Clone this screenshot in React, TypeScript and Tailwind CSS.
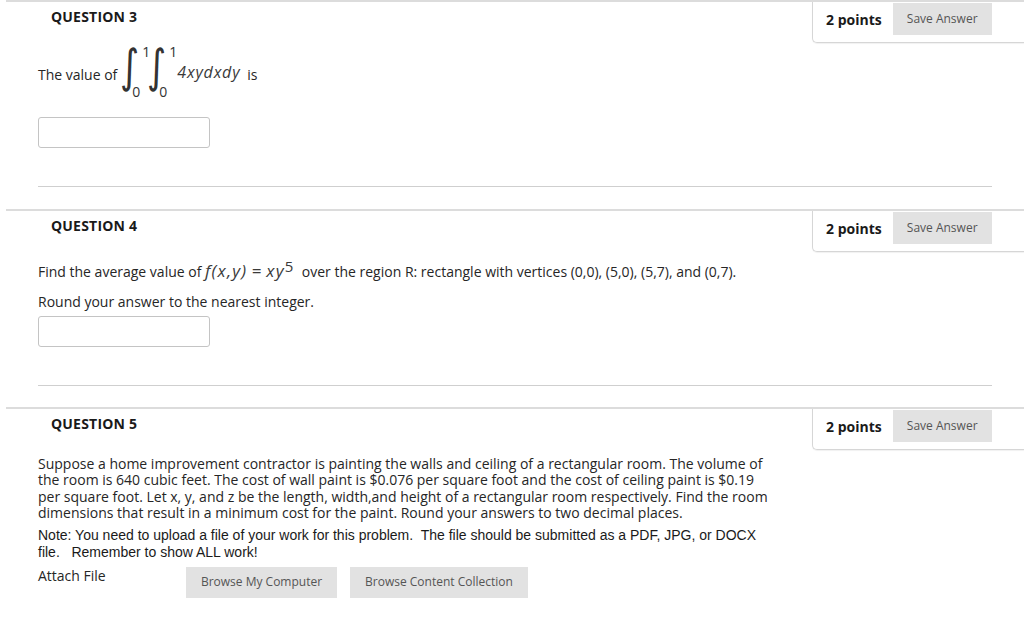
import React from "react";

function PointsBox() {
  return (
    <div className="flex h-[41px] w-[212px] shrink-0 items-center rounded-bl-[5px] border-b border-l border-[#d6d6d6] pb-[6px] pl-[13px] shadow-[0_1px_1px_rgba(0,0,0,0.06)]">
      <span className="text-[14px] font-bold text-[#1a1a1a]">2 points</span>
      <button className="ml-[11px] h-[32px] w-[99px] bg-[#e2e2e2] text-[12px] text-[#555]">Save Answer</button>
    </div>
  );
}

function Header({ n }: { n: number }) {
  return (
    <div className="flex justify-between">
      <h2 className="pl-[45px] pt-[4px] text-[14px] font-bold tracking-[0.2px] text-[#1a1a1a]">QUESTION {n}</h2>
      <PointsBox />
    </div>
  );
}

function AnswerInput() {
  return <div className="h-[31px] w-[172px] rounded-[3px] border border-[#c4c4c4] bg-white" />;
}

// one integral sign with its limits 0..1
function Integral() {
  return (
    <span className="inline-flex h-[56px] w-[27px] shrink-0 items-stretch">
      <span className="-ml-[3px] w-[9px] origin-left scale-x-[0.8] overflow-visible whitespace-nowrap font-['DejaVu_Sans'] text-[46px] italic leading-[46px] text-[#333]">∫</span>
      <span className="flex flex-col justify-between pb-[1px] pt-[2px] text-[14px] leading-[13px] text-[#333]">
        <span className="ml-[13px]">1</span>
        <span className="ml-[3px]">0</span>
      </span>
    </span>
  );
}

export default function App() {
  return (
    <div className="min-h-[627px] bg-white font-['Open_Sans',sans-serif] text-[14px] text-[#262626]">
      {/* question 3 */}
      <section className="ml-[6px] border-t-2 border-[#dcdcdc]">
        <Header n={3} />
        <div className="pl-[32px]">
          <div className="flex h-[56px] items-center">
            <span className="mt-[6px]">The value of</span>
            <span className="ml-[6px] flex items-center">
              <Integral />
              <Integral />
            </span>
            <span className="mt-[2px] text-[16px] italic tracking-[0.8px] text-[#3a3a3a]">4xydxdy</span>
            <span className="mt-[6px] ml-[7px]">is</span>
          </div>
          <div className="mt-[18px]">
            <AnswerInput />
          </div>
          <div className="mr-[32px] mt-[38px] border-t border-[#cfcfcf]" />
        </div>
      </section>

      {/* question 4 */}
      <section className="ml-[6px] mt-[22px] border-t-2 border-[#dcdcdc]">
        <Header n={4} />
        <div className="pl-[32px]">
          <p className="mt-[6px] flex h-[24px] items-baseline">
            <span>Find the average value of&nbsp;</span>
            <span className="text-[17px] italic tracking-[1.2px] text-[#3a3a3a]">
              f(x,y)&thinsp;=&thinsp;xy
              <sup className="relative -top-[5px] not-italic text-[15px]">5</sup>
            </span>
            <span>&nbsp;&nbsp;over the region R: rectangle with vertices (0,0), (5,0), (5,7), and (0,7).</span>
          </p>
          <p className="mt-[9px]">Round your answer to the nearest integer.</p>
          <div className="mt-[4px]">
            <AnswerInput />
          </div>
          <div className="mr-[32px] mt-[38px] border-t border-[#cfcfcf]" />
        </div>
      </section>

      {/* question 5 */}
      <section className="ml-[6px] mt-[21px] border-t-2 border-[#dcdcdc]">
        <Header n={5} />
        <div className="pl-[32px]">
          <p className="mt-[6px] leading-[16.4px]">
            <span className="block">Suppose a home improvement contractor is painting the walls and ceiling of a rectangular room. The volume of</span>
            <span className="block">the room is 640 cubic feet. The cost of wall paint is $0.076 per square foot and the cost of ceiling paint is $0.19</span>
            <span className="block">per square foot. Let x, y, and z be the length, width,and height of a rectangular room respectively. Find the room</span>
            <span className="block">dimensions that result in a minimum cost for the paint. Round your answers to two decimal places.</span>
          </p>
          <p className="mt-[5px] font-['Liberation_Sans',Arial,sans-serif] leading-[17px] text-[#1a1a1a]">
            <span className="block">Note: You need to upload a file of your work for this problem.&nbsp; The file should be submitted as a PDF, JPG, or DOCX</span>
            <span className="block">file.&nbsp;&nbsp; Remember to show ALL work!</span>
          </p>
          <div className="mt-[2px] flex items-start">
            <span className="w-[148px] pt-[2px]">Attach File</span>
            <button className="mt-[4px] h-[31px] w-[151px] bg-[#e2e2e2] text-[12px] text-[#555]">Browse My Computer</button>
            <button className="ml-[13px] mt-[4px] h-[31px] w-[178px] bg-[#e2e2e2] text-[12px] text-[#555]">Browse Content Collection</button>
          </div>
        </div>
      </section>
    </div>
  );
}
